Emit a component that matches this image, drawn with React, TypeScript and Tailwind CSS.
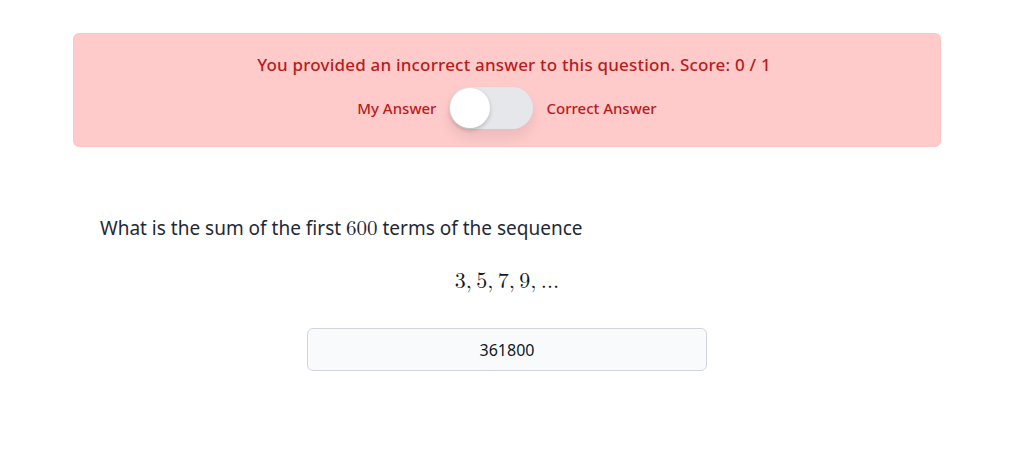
export default function App() {
  const ui = { fontFamily: '"Segoe UI", "Noto Sans", "Open Sans", sans-serif' };
  const math = { fontFamily: '"Latin Modern Math", "DejaVu Serif", "Liberation Serif", serif' };
  return (
    <div className="w-[1024px] h-[452px] bg-white" style={ui}>
      <div className="ml-[73px] w-[868px] pt-[33px]">
        <div className="h-[114px] rounded-md bg-[#fecaca] border border-[#fcc5c5] flex flex-col items-center pt-[19px]">
          <div className="pl-[14px] text-[17px] font-medium text-[#b91c1c] leading-[24px] tracking-[0.2px]">
            You provided an incorrect answer to this question. Score: 0 / 1
          </div>
          <div className="mt-[10px] flex items-center gap-[13px] text-[15px] font-medium text-[#b91c1c]">
            <span>My Answer</span>
            <div className="w-[84px] h-[42px] rounded-full bg-[#e5e7eb] p-[1px] flex items-center shadow-[0_8px_14px_rgba(0,0,0,0.08)]">
              <div className="w-[40px] h-[40px] rounded-full bg-white shadow-[0_2px_4px_rgba(0,0,0,0.2)]" />
            </div>
            <span>Correct Answer</span>
          </div>
        </div>
        <div className="mt-[67px] pl-[27px] text-[19px] text-[#1f2937] leading-[28px]">
          What is the sum of the first <span style={math} className="text-[21px]">600</span> terms of the sequence
        </div>
        <div className="mt-[24px] flex justify-center text-[22px] text-[#111827] leading-[28px]" style={math}>
          3,&#8201;5,&#8201;7,&#8201;9,&#8201;…
        </div>
        <div className="mt-[33px] flex justify-center">
          <div className="w-[400px] h-[43px] rounded-md border border-[#d1d5db] bg-[#f9fafb] flex items-center justify-center text-[16px] text-[#111827]">
            361800
          </div>
        </div>
      </div>
    </div>
  );
}
